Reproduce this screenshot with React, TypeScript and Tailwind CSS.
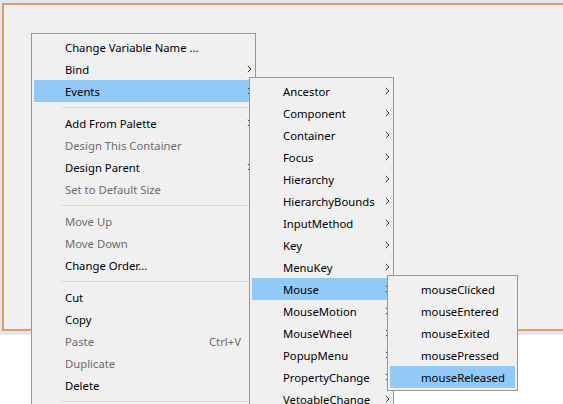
import React from 'react';

type Item =
    | { kind: 'item'; label: string; disabled?: boolean; sub?: boolean; shortcut?: string; active?: boolean }
    | { kind: 'sep' };

const mainItems: Item[] = [
    { kind: 'item', label: 'Change Variable Name ...' },
    { kind: 'item', label: 'Bind', sub: true },
    { kind: 'item', label: 'Events', sub: true, active: true },
    { kind: 'sep' },
    { kind: 'item', label: 'Add From Palette', sub: true },
    { kind: 'item', label: 'Design This Container', disabled: true },
    { kind: 'item', label: 'Design Parent', sub: true },
    { kind: 'item', label: 'Set to Default Size', disabled: true },
    { kind: 'sep' },
    { kind: 'item', label: 'Move Up', disabled: true },
    { kind: 'item', label: 'Move Down', disabled: true },
    { kind: 'item', label: 'Change Order...' },
    { kind: 'sep' },
    { kind: 'item', label: 'Cut' },
    { kind: 'item', label: 'Copy' },
    { kind: 'item', label: 'Paste', disabled: true, shortcut: 'Ctrl+V' },
    { kind: 'item', label: 'Duplicate', disabled: true },
    { kind: 'item', label: 'Delete' },
    { kind: 'sep' },
];

const eventNames = [
    'Ancestor', 'Component', 'Container', 'Focus', 'Hierarchy', 'HierarchyBounds', 'InputMethod',
    'Key', 'MenuKey', 'Mouse', 'MouseMotion', 'MouseWheel', 'PopupMenu', 'PropertyChange', 'VetoableChange',
];
const eventItems: Item[] = eventNames.map(n => ({ kind: 'item', label: n, sub: true, active: n === 'Mouse' }));

const mouseItems: Item[] = ['mouseClicked', 'mouseEntered', 'mouseExited', 'mousePressed', 'mouseReleased']
    .map(n => ({ kind: 'item', label: n, active: n === 'mouseReleased' }));

const Chevron: React.FC = () => (
    <svg width="5" height="8" viewBox="0 0 5 8" className="block">
        <polyline points="0.8,0.8 4,4 0.8,7.2" fill="none" stroke="#3c3c3c" strokeWidth="1" />
    </svg>
);

// one popup menu, windows 10 look
const Menu: React.FC<{ items: Item[]; className: string }> = ({ items, className }) => (
    <div className={`absolute border border-[#979797] bg-[#f0f0f0] p-[2px] ${className}`}>
        {items.map((it, i) =>
            it.kind === 'sep' ? (
                <div key={i} className="h-[10px] flex items-center pl-[28px] pr-[1px]">
                    <div className="h-px w-full bg-[#d7d7d7]" />
                </div>
            ) : (
                <div
                    key={i}
                    className={`h-[22px] flex items-center pl-[31px] pt-[2px] whitespace-nowrap ${it.active ? 'bg-[#91c9f7]' : ''} ${it.disabled ? 'text-[#6d6d6d]' : 'text-black'}`}
                >
                    <span className="flex-1">{it.label}</span>
                    {it.shortcut && <span>{it.shortcut}</span>}
                    <span className="w-[12px] flex items-center pl-[6px] -mt-[2px]">{it.sub && <Chevron />}</span>
                </div>
            )
        )}
    </div>
);

const App: React.FC = () => {
    return (
        <div
            className="relative w-[563px] h-[404px] overflow-hidden bg-white text-[11.3px] leading-[20px]"
            style={{ fontFamily: '"Noto Sans", "Open Sans", sans-serif' }}
        >
            <div className="bg-[#e4e4f4] pt-[3px] pl-[2px] pb-[4px]">
                <div className="h-[328px] border-l-2 border-t-2 border-b-2 border-[#d6a25e] bg-[#f0f0f0]" />
            </div>

            <Menu items={mainItems} className="left-[31px] top-[33px] w-[225px]" />
            <Menu items={eventItems} className="left-[249px] top-[77px] w-[145px]" />
            <Menu items={mouseItems} className="left-[387px] top-[275px] w-[131px]" />
        </div>
    );
};

export default App;
